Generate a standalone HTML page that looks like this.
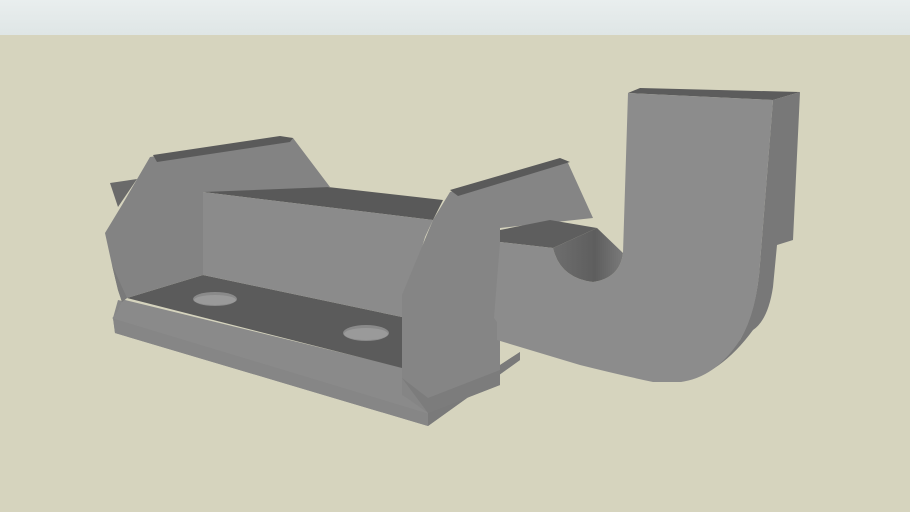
<!DOCTYPE html>
<html><head><meta charset="utf-8"><style>
html,body{margin:0;padding:0;width:910px;height:512px;overflow:hidden;background:#d6d4be}
svg{display:block}
</style></head><body>
<svg width="910" height="512" viewBox="0 0 910 512" xmlns="http://www.w3.org/2000/svg">
<defs>
<linearGradient id="sky" x1="0" y1="0" x2="0" y2="1"><stop offset="0" stop-color="#e9eeee"/><stop offset="1" stop-color="#dfe6e6"/></linearGradient>
<linearGradient id="cut" x1="0" y1="0" x2="1" y2="0"><stop offset="0" stop-color="#6e6e6e"/><stop offset="0.6" stop-color="#5e5e5e"/><stop offset="1" stop-color="#7a7a7a"/></linearGradient>
</defs>
<rect x="0" y="0" width="910" height="35" fill="url(#sky)"/>
<rect x="0" y="35" width="910" height="477" fill="#d6d4be"/>

<!-- underlay to avoid seams -->
<polygon points="118,300 402,368 428,413 520,352 520,360 428,426 115,333 113,318" fill="#878787"/>
<!-- base slab -->
<polygon points="113,318 428,413 428,426 115,333" fill="#868686"/>
<polygon points="428,413 520,352 520,360 428,426" fill="#7a7a7a"/>
<polygon points="410,404 500,365 520,352 428,413" fill="#5a5a5a"/>

<!-- front lip -->
<polygon points="123,300 402,368 410,400 428,413 113,318 118,312" fill="#8a8a8a" stroke="#8a8a8a" stroke-width="1"/>
<!-- floor -->
<polygon points="127,298 203,275 402,317 402,368" fill="#5b5b5b"/>
<ellipse cx="215" cy="299" rx="22" ry="7" fill="#8a8a8a"/>
<ellipse cx="215" cy="300" rx="21" ry="5" fill="#9a9a9a"/>
<ellipse cx="366" cy="333" rx="23" ry="8" fill="#8a8a8a"/>
<ellipse cx="366" cy="334" rx="22" ry="6" fill="#9a9a9a"/>

<!-- back block -->
<polygon points="203,192 257,179 443,200 433,220" fill="#595959"/>
<polygon points="203,192 433,220 425,237 402,317 203,275" fill="#8b8b8b"/>

<!-- left upright -->
<polygon points="110,183 137,179 118,207" fill="#6a6a6a"/>
<polygon points="150,157 280,137 293,138 330,187 203,192 203,275 127,298 122,302 118,290 112,265 105,233 122,205" fill="#838383"/>
<polygon points="153,155 280,136 293,138 290,142 157,162" fill="#5a5a5a"/>
<polygon points="112,265 127,298 122,302 118,290" fill="#7a7a7a"/>

<!-- right upright -->
<polygon points="450,192 560,160 568,163 593,218 500,228 500,385 428,413 410,400 402,395 402,295 433,220" fill="#858585"/>
<polygon points="450,190 560,158 570,162 458,196" fill="#5a5a5a"/>
<polygon points="402,378 428,413 500,385 500,370 428,398" fill="#7c7c7c"/>

<!-- J piece -->
<polygon points="500,230 550,220 597,228 553,248 500,242" fill="#5e5e5e"/>
<path d="M628,93 L640,88 L800,92 L773,100 Z" fill="#5c5c5c"/>
<path d="M773,100 L800,92 L793,240 L777,245 L773,287 Q768,320 753,330 Q720,375 680,382 L740,340 Q757,310 760,263 Z" fill="#787878"/>
<path d="M500,242 L553,248 Q560,278 593,282 Q620,278 623,253 L628,93 L773,100 L760,263 Q757,312 740,340 Q715,378 680,382 L653,382 Q620,375 580,365 L497,340 L497,322 L494,318 Z" fill="#8c8c8c"/>
<path d="M553,248 Q560,278 593,282 Q620,278 623,253 L597,228 Z" fill="url(#cut)"/>
</svg>
</body></html>
